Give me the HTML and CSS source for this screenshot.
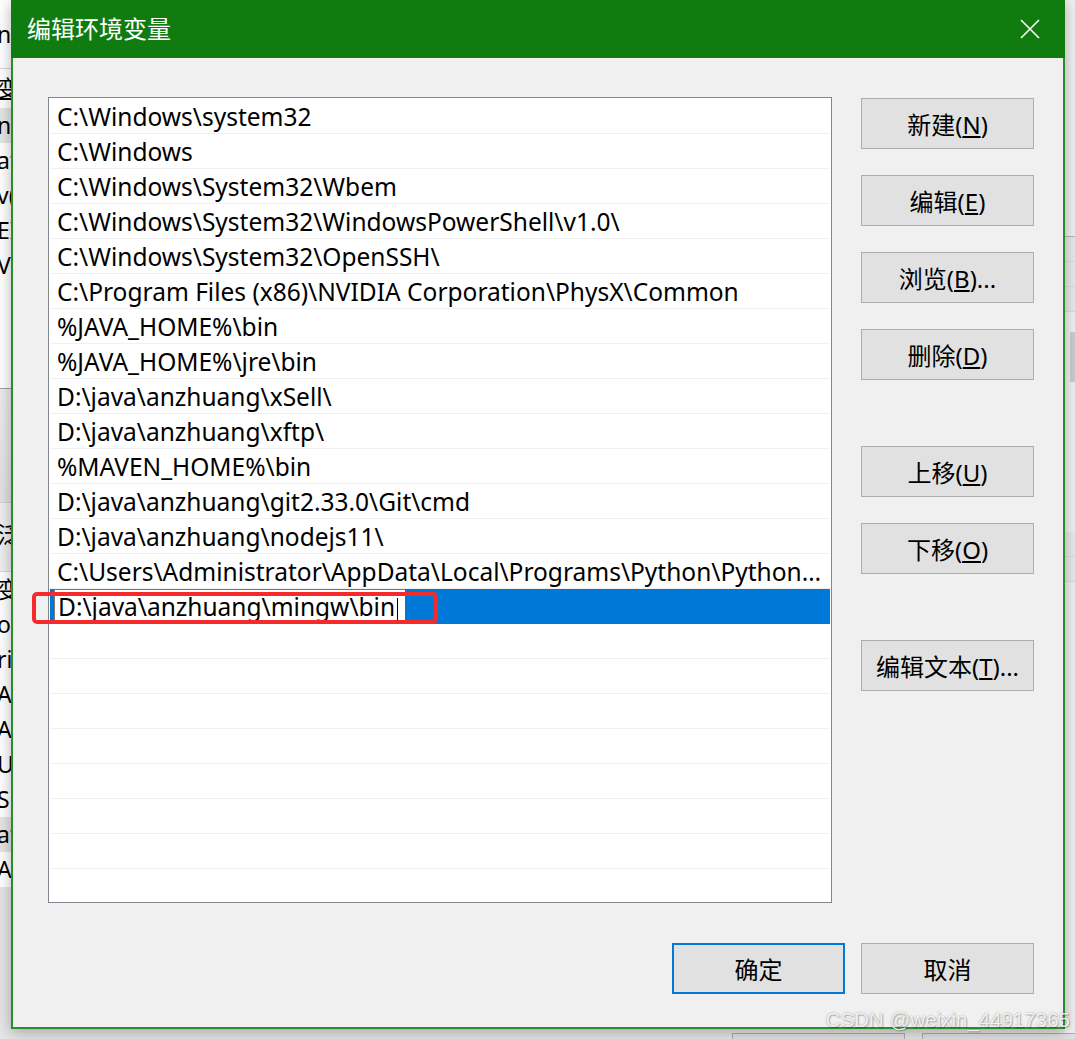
FILE: index.html
```html
<!DOCTYPE html>
<html lang="zh-CN">
<head>
  <meta charset="UTF-8" />
  <title>编辑环境变量</title>
  <link rel="stylesheet" href="styles.css">
</head>
<body>

  <!-- window behind the dialog, only its edges show -->
  <div class="back-window">
    <div class="back-left">
      <div class="bl-row tall">n</div>
      <div class="bl-row head"><u>变量</u></div>
      <div class="bl-row grey">n</div>
      <div class="bl-row">at</div>
      <div class="bl-row">v(</div>
      <div class="bl-row">EI</div>
      <div class="bl-row">V</div>
      <div class="bl-blank"></div>
      <div class="bl-panel"></div>
      <div class="bl-row head2">泛</div>
      <div class="bl-row">变量</div>
      <div class="bl-row">o</div>
      <div class="bl-row">ri</div>
      <div class="bl-row">A</div>
      <div class="bl-row">A</div>
      <div class="bl-row">U</div>
      <div class="bl-row">S</div>
      <div class="bl-row grey">at</div>
      <div class="bl-row">A</div>
    </div>
    <div class="back-right">
      <div class="br-top"></div>
      <div class="br-cell"></div>
      <div class="br-cell"></div>
      <div class="br-cell"></div>
      <div class="br-track"><div class="br-thumb"></div></div>
      <div class="br-cell"></div>
      <div class="br-cell"></div>
    </div>
    <div class="back-foot">
      <span class="back-btn"></span>
      <span class="back-btn"></span>
    </div>
  </div>

  <div class="dialog">
    <div class="titlebar">
      <span class="title">编辑环境变量</span>
      <svg class="close" width="20" height="20" viewBox="0 0 20 20">
        <path d="M1 1 L19 19 M19 1 L1 19" stroke="#fff" stroke-width="1.6" fill="none"/>
      </svg>
    </div>

    <div class="dialog-body">
      <div class="main">
        <div class="path-list">
          <div class="row">C:\Windows\system32</div>
          <div class="row">C:\Windows</div>
          <div class="row">C:\Windows\System32\Wbem</div>
          <div class="row">C:\Windows\System32\WindowsPowerShell\v1.0\</div>
          <div class="row">C:\Windows\System32\OpenSSH\</div>
          <div class="row">C:\Program Files (x86)\NVIDIA Corporation\PhysX\Common</div>
          <div class="row">%JAVA_HOME%\bin</div>
          <div class="row">%JAVA_HOME%\jre\bin</div>
          <div class="row">D:\java\anzhuang\xSell\</div>
          <div class="row">D:\java\anzhuang\xftp\</div>
          <div class="row">%MAVEN_HOME%\bin</div>
          <div class="row">D:\java\anzhuang\git2.33.0\Git\cmd</div>
          <div class="row">D:\java\anzhuang\nodejs11\</div>
          <div class="row">C:\Users\Administrator\AppData\Local\Programs\Python\Python39\Scripts\</div>
          <div class="row selected">
            <span class="edit-box">D:\java\anzhuang\mingw\bin<span class="caret"></span></span>
          </div>
          <div class="row"></div>
          <div class="row"></div>
          <div class="row"></div>
          <div class="row"></div>
          <div class="row"></div>
          <div class="row"></div>
          <div class="row"></div>
          <div class="row"></div>
        </div>

        <div class="side-buttons">
          <button>新建(<u>N</u>)</button>
          <button>编辑(<u>E</u>)</button>
          <button>浏览(<u>B</u>)...</button>
          <button>删除(<u>D</u>)</button>
          <button class="spaced">上移(<u>U</u>)</button>
          <button>下移(<u>O</u>)</button>
          <button class="spaced">编辑文本(<u>T</u>)...</button>
        </div>
      </div>

      <div class="footer">
        <button class="default">确定</button>
        <button>取消</button>
      </div>
    </div>

    <!-- red annotation round the new entry -->
    <div class="mark-box"></div>
  </div>

  <div class="watermark">CSDN @weixin_44917365</div>

</body>
</html>
```

FILE: styles.css
```css
body {
  margin: 0;
  width: 1075px;
  height: 1039px;
  overflow: hidden;
  position: relative;
  background: #e6e6e6;
  font-family: "Noto Sans", "Noto Sans CJK SC", sans-serif;
}

/* ---- background window ---- */

.back-window {
  position: absolute;
  top: 0; left: 0;
  width: 100%; height: 100%;
}

.back-left {
  position: absolute;
  top: 0; left: 0;
  width: 40px;
  background: #fff;
  display: flex;
  flex-direction: column;
}

.bl-row {
  height: 35px;
  line-height: 35px;
  font-size: 23px;
  color: #000;
  padding-left: 0;
  text-indent: -3px;
  white-space: nowrap;
  overflow: hidden;
}

.bl-row.tall {
  height: 68px;
  line-height: 68px;
  border-bottom: 1px solid #d9d9d9;
}

.bl-row.head {
  height: 39px;
  line-height: 36px;
  font-size: 22px;
}

.bl-row.grey {
  background: #e5e5e5;
}

.bl-blank {
  height: 105px;
  border-bottom: 1px solid #a0a0a0;
}

.bl-panel {
  height: 113px;
  background: linear-gradient(#ececec, #e2e2e2);
  border-bottom: 1px solid #d0d0d0;
}

.bl-row.head2 {
  height: 68px;
  line-height: 62px;
  background: #efefef;
  border-bottom: 1px solid #dadada;
}

.back-right {
  position: absolute;
  top: 0; left: 1065px;
  width: 10px;
  height: 100%;
  background: #f0f0f0;
  display: flex;
  flex-direction: column;
}

.br-top {
  height: 236px;
  border-bottom: 1px solid #b5b5b5;
}

.br-cell {
  height: 24px;
  border-bottom: 1px solid #dcdcdc;
  background: #e9e9e9;
}

.br-track {
  height: 200px;
  background: #f2f2f2;
  padding: 20px 0 0 5px;
}

.br-thumb {
  height: 50px;
  background: #cdcdcd;
}

.back-foot {
  position: absolute;
  top: 1033px; left: 732px;
  display: flex;
  gap: 17px;
}

.back-btn {
  width: 171px;
  height: 30px;
  border: 1px solid #adadad;
  background: #e1e1e1;
}

/* ---- dialog ---- */

.dialog {
  position: absolute;
  top: 0; left: 11px;
  width: 1054px;
  height: 1029px;
  box-sizing: border-box;
  border: 2px solid #2b8c2b;
  border-top: none;
  background: #f0f0f0;
  box-shadow: 0 3px 14px rgba(0,0,0,0.3);
}

.titlebar {
  height: 58px;
  margin: 0 -2px;
  padding: 0 25px 0 16px;
  background: #107c10;
  display: flex;
  align-items: center;
  justify-content: space-between;
}

.title {
  color: #fff;
  font-size: 24px;
  margin-top: -3px;
}

.close {
  margin-top: -1px;
}

.dialog-body {
  height: 969px;
  box-sizing: border-box;
  padding: 39px 29px 33px 35px;
  display: flex;
  flex-direction: column;
}

.main {
  display: flex;
  gap: 29px;
}

.path-list {
  width: 784px;
  height: 806px;
  box-sizing: border-box;
  border: 1px solid #828790;
  background: #fff;
  padding: 1px 1px 0;
  overflow: hidden;
}

.row {
  height: 35px;
  box-sizing: border-box;
  border-bottom: 1px solid #f0f0f0;
  padding: 0 4px 0 7px;
  font-size: 24.5px;
  line-height: 35px;
  color: #000;
  white-space: nowrap;
  overflow: hidden;
  text-overflow: ellipsis;
}

.row.selected {
  background: #0078d7;
  border-bottom-color: #0078d7;
  padding: 0 0 0 4px;
}

.edit-box {
  display: inline-block;
  width: 351px;
  height: 34px;
  box-sizing: border-box;
  background: #fff;
  border: 1px solid #7a7a7a;
  border-bottom: none;
  border-right: none;
  padding-left: 3px;
  line-height: 34px;
  vertical-align: top;
}

.caret {
  display: inline-block;
  width: 1px;
  height: 22px;
  margin-left: 2px;
  background: #000;
  vertical-align: -4px;
}

.side-buttons {
  width: 173px;
  padding-top: 1px;
  display: flex;
  flex-direction: column;
  gap: 26px;
}

button {
  width: 173px;
  height: 51px;
  box-sizing: border-box;
  border: 1px solid #adadad;
  background: #e1e1e1;
  font-family: "Noto Sans", "Noto Sans CJK SC", sans-serif;
  font-size: 24px;
  color: #000;
  padding: 0;
}

.side-buttons .spaced {
  margin-top: 40px;
}

.footer {
  margin-top: 40px;
  display: flex;
  justify-content: flex-end;
  gap: 16px;
}

.footer .default {
  border: 2px solid #0078d7;
}

.mark-box {
  position: absolute;
  top: 592px; left: 19px;
  width: 406px;
  height: 32px;
  box-sizing: border-box;
  border: 4px solid #f52a2a;
  border-radius: 5px;
}

.watermark {
  position: absolute;
  right: 5px; bottom: 7px;
  font-family: "Liberation Sans", sans-serif;
  font-size: 20.5px;
  color: rgba(255,255,255,0.85);
  text-shadow: 0 0 2px rgba(0,0,0,0.35), 1px 1px 1px rgba(0,0,0,0.2);
}
```
